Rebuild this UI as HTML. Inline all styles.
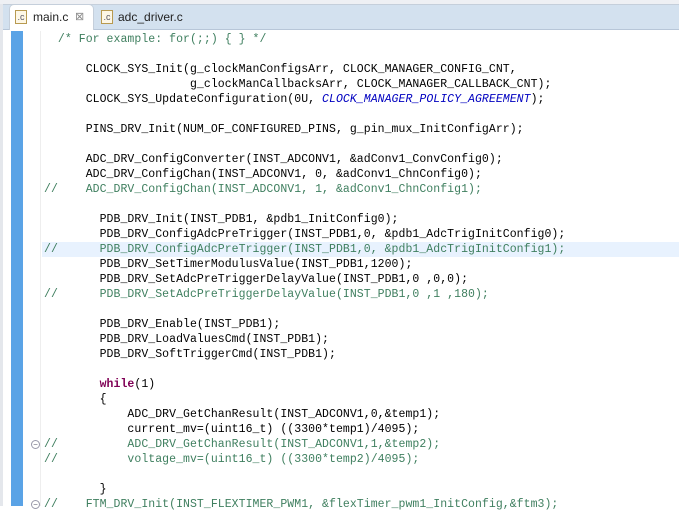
<!DOCTYPE html>
<html><head><style>
html,body{margin:0;padding:0;width:679px;height:506px;overflow:hidden;background:#fff;font-family:"Liberation Sans",sans-serif}
.top{position:absolute;left:0;top:0;width:679px;height:4px;background:#eef0f4}
.bar{position:absolute;left:3px;top:4px;width:676px;height:24px;background:#d3e1ef;border-top:1px solid #c5cfdb;border-bottom:1px solid #b7c6d8}
.lb{position:absolute;left:0;top:4px;width:3px;height:502px;background:#e4e7ec}
.tab{position:absolute;left:9px;top:4px;width:83px;height:25px;background:#fff;border:1px solid #c5cfdb;border-bottom:none;border-radius:5px 5px 0 0}
.t{position:absolute;font-size:12px;color:#222;top:10px}
.ic{position:absolute;top:10px;width:10px;height:12px;border:1px solid #b89a50;background:#fdf7e6;font-size:9px;line-height:12px;color:#556;text-align:center}
.hatch{position:absolute;left:11px;top:31px;width:12px;height:475px;background:#5aa3e6}
.gl{position:absolute;left:40px;top:31px;width:1px;height:475px;background:#eee}
.hl{position:absolute;left:42px;top:242px;width:637px;height:15px;background:#e8f2fe}
pre{position:absolute;left:44px;top:32px;margin:0;font-family:"Liberation Mono",monospace;font-size:11.5px;letter-spacing:0.05px;line-height:15px;color:#000}
.c{color:#3f7f5f}.k{color:#7f0055;font-weight:bold}.e{color:#0000c0;font-style:italic}
.fold{position:absolute;left:31px;width:7px;height:7px;border:1px solid #99a;border-radius:50%;font-size:8px;line-height:7px;text-align:center;color:#667}
</style></head><body>
<div class="top"></div><div class="bar"></div><div class="lb"></div>
<div class="tab"></div>
<div class="ic" style="left:15px">.c</div><div class="t" style="left:33px">main.c</div>
<div class="t" style="left:75px;color:#888;font-size:11px">⊠</div>
<div class="ic" style="left:101px">.c</div><div class="t" style="left:118px">adc_driver.c</div>
<div class="hatch"></div><div class="gl"></div><div class="hl"></div>
<div class="fold" style="top:440px">−</div><div class="fold" style="top:500px">−</div>
<pre><span class="c">  /* For example: for(;;) { } */</span>

      CLOCK_SYS_Init(g_clockManConfigsArr, CLOCK_MANAGER_CONFIG_CNT,
                     g_clockManCallbacksArr, CLOCK_MANAGER_CALLBACK_CNT);
      CLOCK_SYS_UpdateConfiguration(0U, <span class="e">CLOCK_MANAGER_POLICY_AGREEMENT</span>);

      PINS_DRV_Init(NUM_OF_CONFIGURED_PINS, g_pin_mux_InitConfigArr);

      ADC_DRV_ConfigConverter(INST_ADCONV1, &amp;adConv1_ConvConfig0);
      ADC_DRV_ConfigChan(INST_ADCONV1, 0, &amp;adConv1_ChnConfig0);
<span class="c">//    ADC_DRV_ConfigChan(INST_ADCONV1, 1, &amp;adConv1_ChnConfig1);</span>

        PDB_DRV_Init(INST_PDB1, &amp;pdb1_InitConfig0);
        PDB_DRV_ConfigAdcPreTrigger(INST_PDB1,0, &amp;pdb1_AdcTrigInitConfig0);
<span class="c">//      PDB_DRV_ConfigAdcPreTrigger(INST_PDB1,0, &amp;pdb1_AdcTrigInitConfig1);</span>
        PDB_DRV_SetTimerModulusValue(INST_PDB1,1200);
        PDB_DRV_SetAdcPreTriggerDelayValue(INST_PDB1,0 ,0,0);
<span class="c">//      PDB_DRV_SetAdcPreTriggerDelayValue(INST_PDB1,0 ,1 ,180);</span>

        PDB_DRV_Enable(INST_PDB1);
        PDB_DRV_LoadValuesCmd(INST_PDB1);
        PDB_DRV_SoftTriggerCmd(INST_PDB1);

        <span class="k">while</span>(1)
        {
            ADC_DRV_GetChanResult(INST_ADCONV1,0,&amp;temp1);
            current_mv=(uint16_t) ((3300*temp1)/4095);
<span class="c">//          ADC_DRV_GetChanResult(INST_ADCONV1,1,&amp;temp2);</span>
<span class="c">//          voltage_mv=(uint16_t) ((3300*temp2)/4095);</span>

        }
<span class="c">//    FTM_DRV_Init(INST_FLEXTIMER_PWM1, &amp;flexTimer_pwm1_InitConfig,&amp;ftm3);</span></pre>
</body></html>
